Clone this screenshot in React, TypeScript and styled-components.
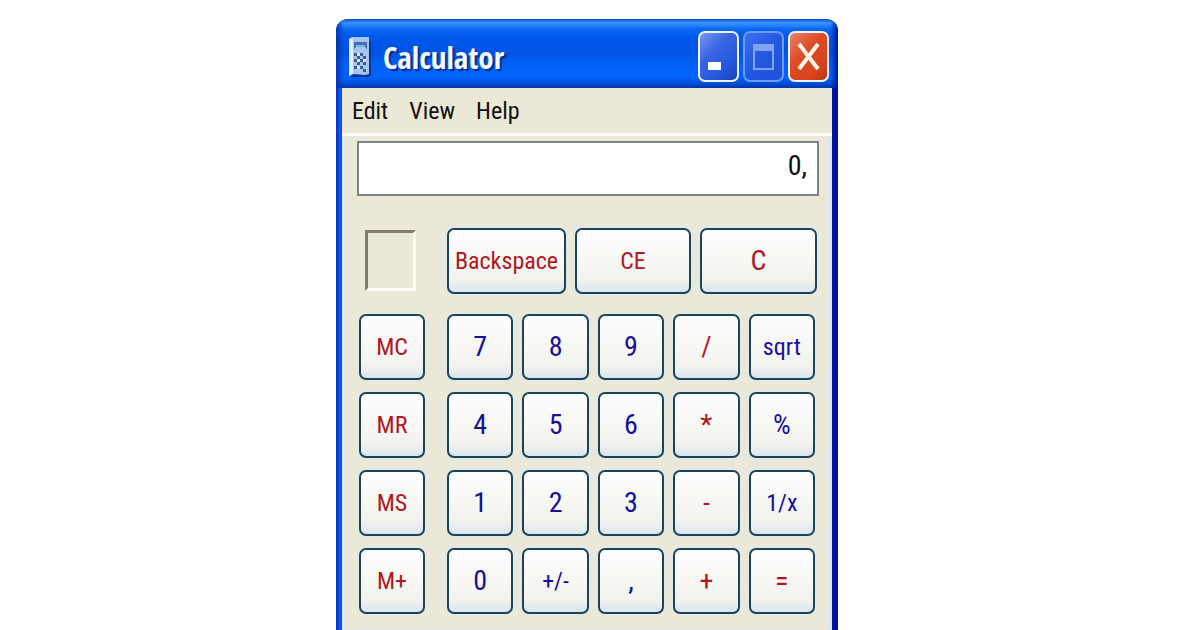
import React from "react";
import styled, { createGlobalStyle } from "styled-components";

const GlobalStyle = createGlobalStyle`
  *, *::before, *::after { box-sizing: border-box; }
  body { margin: 0; background: #fff; }
  button, input { font: inherit; }
`;

const Page = styled.main`
  min-height: 100vh;
  display: grid;
  grid-template-columns: 336fr 502fr 362fr;
  padding-top: 19px;
  font-family: "Roboto Condensed", Roboto, sans-serif;
`;

const Window = styled.section`
  grid-column: 2;
  min-width: 0;
  display: flex;
  flex-direction: column;
  border-radius: 12px 12px 0 0;
  overflow: hidden;
  background: linear-gradient(90deg, #0a34c4 0, #0a3cd0 2px, #1262f4 4px, #0a3cd8 6px, #0a3cd8 50%, #00129a 50%);
`;

const TitleBar = styled.header`
  display: flex;
  align-items: center;
  height: 69px;
  padding: 6px 9px 0 12px;
  background:
    linear-gradient(90deg, #0634b0 0, #0634b000 8px, #0634b000 calc(100% - 8px), #00189a 100%),
    linear-gradient(180deg, #0a50d0 0, #3a94ff 4px, #0a68f4 10px, #0058ea 18px, #0054e4 34px, #0062fa 48px, #0064ff 58px, #0450dc 64px, #0334a8 69px);
`;

const Title = styled.h1`
  flex: 1;
  margin: 0 0 0 11px;
  font-family: "Open Sans Condensed", "Open Sans", sans-serif;
  font-size: 31px;
  line-height: 36px;
  font-weight: 700;
  color: #f4faff;
  text-shadow: 2px 2px 1px #0a2a90;
`;

const Controls = styled.div`
  display: flex;
  gap: 4px;
`;

const ControlButton = styled.button<{ $kind: "min" | "max" | "close" }>`
  display: grid;
  place-items: center;
  width: 41px;
  height: 51px;
  padding: 0;
  border-radius: 7px;
  border: 2px solid ${(p) => (p.$kind === "max" ? "#6a9cf8" : "#eef4ff")};
  background: ${(p) =>
    p.$kind === "close"
      ? "linear-gradient(135deg, #e8836a 0, #dc4c26 40%, #d8441c 75%, #b83a18 100%)"
      : p.$kind === "max"
        ? "linear-gradient(135deg, #3a70ec 0, #2458e0 50%, #1c50dc 100%)"
        : "linear-gradient(135deg, #7a98f4 0, #3c66e4 35%, #2458e0 70%, #1c44b8 100%)"};
`;

const MenuBar = styled.nav`
  display: flex;
  gap: 21px;
  height: 48px;
  margin: 0 6px;
  padding: 7px 10px 0;
  background: #ebe8d8;
  border-bottom: 3px solid #fbfbf4;
`;

const MenuLink = styled.a`
  font-size: 24px;
  line-height: 32px;
  color: #111;
  text-decoration: none;
`;

const Body = styled.div`
  flex: 1;
  margin: 0 6px;
  padding: 5px 13px 15px 15px;
  background: #ebe8d8;
  box-shadow: inset 3px 0 2px #dde9f4, inset -3px 0 2px #d4e4fa;
`;

const Display = styled.input`
  display: block;
  width: 100%;
  height: 55px;
  padding: 0 10px 6px;
  border: 2px solid #7c8488;
  border-radius: 0;
  background: #fff;
  color: #111;
  font-size: 28px;
  text-align: right;
  outline: none;
`;

const TopRow = styled.div`
  display: flex;
  gap: 31px;
  margin: 32px 2px 0 8px;
`;

const MemoryBox = styled.output`
  width: 51px;
  height: 61px;
  margin-top: 2px;
  border: 3px solid;
  border-color: #847c6c #fcfaf0 #fcfaf0 #847c6c;
`;

const EditKeys = styled.div`
  flex: 1;
  display: grid;
  grid-template-columns: 119fr 116fr 117fr;
  gap: 9px;
`;

const Keypad = styled.div`
  display: flex;
  gap: 22px;
  margin: 20px 4px 0 2px;
`;

const MemoryKeys = styled.div`
  width: 66px;
  display: grid;
  gap: 12px;
`;

const MainKeys = styled.div`
  flex: 1;
  display: grid;
  grid-template-columns: repeat(5, 1fr);
  gap: 12px 9px;
`;

const Key = styled.button<{ $tone: "red" | "blue"; $long?: boolean }>`
  min-width: 0;
  height: 66px;
  padding: 0;
  border: 2px solid #1c4458;
  border-radius: 7px;
  background: linear-gradient(180deg, #fdfefe 0, #f8f8f5 45%, #f1f1ed 82%, #d9e5ef 100%);
  box-shadow: 0 0 3px 2px #e2e9e4;
  color: ${(p) => (p.$tone === "blue" ? "#17109a" : "#b01822")};
  font-size: ${(p) => (p.$long ? "24px" : "28px")};
  line-height: 32px;
  white-space: nowrap;
`;

const memoryKeys = ["MC", "MR", "MS", "M+"];

const mainKeys = [
  "7", "8", "9", "/", "sqrt",
  "4", "5", "6", "*", "%",
  "1", "2", "3", "-", "1/x",
  "0", "+/-", ",", "+", "=",
];

const operators = new Set(["/", "*", "-", "+", "="]);

function CalculatorIcon() {
  return (
    <svg width="24" height="40" viewBox="0 0 24 40" aria-hidden="true">
      <path d="M3 4H23V39L20 40H3Z" fill="#0b3696" />
      <path d="M1 2L4 0H21V37L17 38L5 37L1 39Z" fill="#a4c4ec" />
      <path d="M1 2L5 1V37L1 39Z" fill="#e0ecfa" />
      <path d="M6 5H19V12L17 10H8L6 12Z" fill="#3f6fb8" />
      <path d="M8 8H17V10H8Z" fill="#83b0dd" />
      <path d="M6 16h3v3H6zm6 0h3v3h-3zM9 19h3v3H9zm6 0h3v3h-3zM6 22h3v3H6zm6 0h3v3h-3zM9 25h3v3H9zm6 0h3v3h-3zM6 29h3v3H6zm6 0h3v3h-3zM15 32h3v3h-3z" fill="#3c5a96" />
      <path d="M9 16h3v3H9zm0 6h3v3H9zm0 7h3v3H9zm6-7h3v3h-3z" fill="#dbe9fa" />
    </svg>
  );
}

export default function App() {
  return (
    <Page>
      <GlobalStyle />
      <Window>
        <TitleBar>
          <CalculatorIcon />
          <Title>Calculator</Title>
          <Controls>
            <ControlButton $kind="min" aria-label="Minimize">
              <svg width="37" height="47" viewBox="0 0 37 47">
                <path d="M8 29H21V37H8Z" fill="#fff" />
              </svg>
            </ControlButton>
            <ControlButton $kind="max" aria-label="Maximize">
              <svg width="37" height="47" viewBox="0 0 37 47">
                <path d="M9 12H28V36H9Z" fill="none" stroke="#7ea4f6" strokeWidth="2" />
                <path d="M9 12H28V18H9Z" fill="#7ea4f6" />
              </svg>
            </ControlButton>
            <ControlButton $kind="close" aria-label="Close">
              <svg width="37" height="47" viewBox="0 0 37 47">
                <path d="M9 11L28 36M28 11L9 36" stroke="#fff8e8" strokeWidth="4" />
              </svg>
            </ControlButton>
          </Controls>
        </TitleBar>
        <MenuBar>
          <MenuLink href="#edit">Edit</MenuLink>
          <MenuLink href="#view">View</MenuLink>
          <MenuLink href="#help">Help</MenuLink>
        </MenuBar>
        <Body>
          <Display aria-label="Result" defaultValue="0," />
          <TopRow>
            <MemoryBox aria-label="Memory" />
            <EditKeys>
              <Key $tone="red" $long>Backspace</Key>
              <Key $tone="red" $long>CE</Key>
              <Key $tone="red">C</Key>
            </EditKeys>
          </TopRow>
          <Keypad>
            <MemoryKeys>
              {memoryKeys.map((label) => (
                <Key key={label} $tone="red" $long>{label}</Key>
              ))}
            </MemoryKeys>
            <MainKeys>
              {mainKeys.map((label) => (
                <Key
                  key={label}
                  $tone={operators.has(label) ? "red" : "blue"}
                  $long={label.length > 1}
                >
                  {label}
                </Key>
              ))}
            </MainKeys>
          </Keypad>
        </Body>
      </Window>
    </Page>
  );
}
